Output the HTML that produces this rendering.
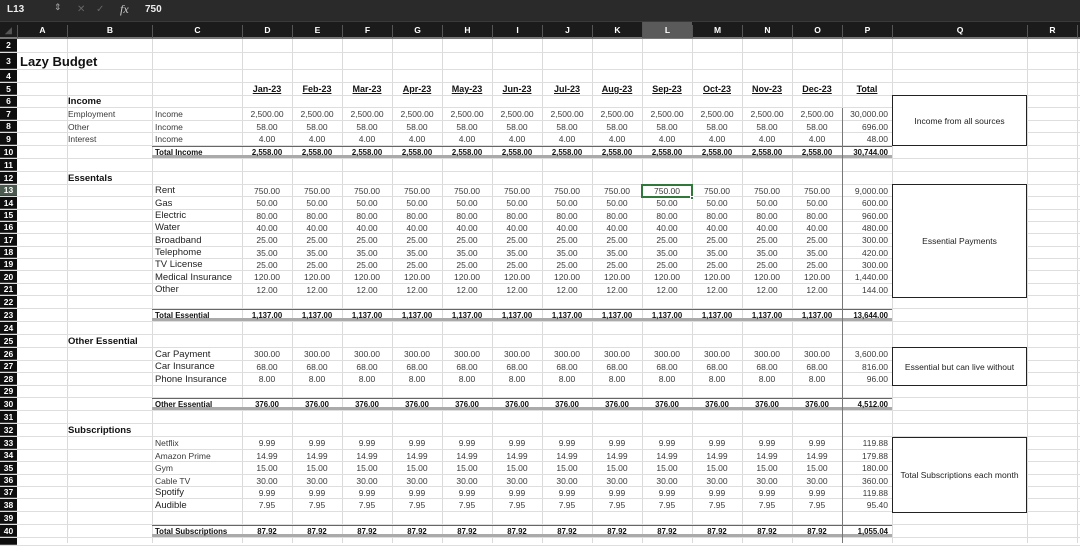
<!DOCTYPE html>
<html><head><meta charset="utf-8"><style>
*{margin:0;padding:0;box-sizing:border-box}
body{width:1080px;height:543px;overflow:hidden;background:#fff;font-family:"Liberation Sans",sans-serif;position:relative;color:#3a3a3a}
#fb{position:absolute;left:0;top:0;width:1080px;height:21px;background:#2a2a2a;color:#eee;font-size:10px}
#fb span{position:absolute;top:4px}
#ch{position:absolute;left:0;top:21px;width:1080px;height:18px;background:#1b1b1b;border-top:1px solid #3a3a3a;border-bottom:2px solid #777}
#ch span{position:absolute;top:3px;color:#fff;font-weight:bold;font-size:8.5px;text-align:center;border-left:1px solid #555;height:13px}
#rh{position:absolute;left:0;top:39px;width:17px;height:504px;background:#0e0e0e}
.v{position:absolute;top:39px;height:504px;width:1px;background:#dadada}
.r{position:absolute;left:0;width:1080px;border-bottom:1px solid #dedede;font-size:8.5px}
.r>s{position:absolute;left:0;top:0;width:17px;height:100%;text-decoration:none;color:#fff;font-weight:bold;font-size:8.5px;text-align:center;display:flex;align-items:center;justify-content:center;background:#0e0e0e;border-bottom:1px solid #444}
.r>.b,.r>.c{position:absolute;top:0;height:100%;display:flex;align-items:center;white-space:nowrap}
.r>.b{left:68px}
.r>.c{left:155px}
.m{position:absolute;left:242px;top:0;height:100%;display:flex;align-items:center}
.m i{font-style:normal;width:50px;text-align:center}
.m b{font-weight:normal;width:50px;text-align:right;padding-right:4px}
.t .m i,.t .m b,.t .c{font-weight:bold;font-size:7.8px;color:#111}
.t .m,.t .c{padding-top:1px}
.t .tb{position:absolute;left:152px;width:740px;top:0;height:100%;border-top:1px solid #666;border-bottom:3px solid #aaa}
.a{font-size:9.5px;color:#222}
.h{font-weight:bold;font-size:9.5px;color:#111}
.box{position:absolute;left:892px;width:135px;border:1px solid #222;display:flex;align-items:center;justify-content:center;font-size:8.5px;color:#222;background:#fff}
</style></head><body>
<div id="fb"><span style="left:7px;font-weight:bold">L13</span><span style="left:54px;color:#aaa;font-size:9px;top:2px">&#x21D5;</span><span style="left:77px;color:#666">&#x2715;</span><span style="left:96px;color:#666">&#x2713;</span><span style="left:120px;font-style:italic;font-family:'Liberation Serif',serif;font-size:12px;top:2px;color:#ccc">fx</span><span style="left:145px;font-weight:bold">750</span></div>
<div id="ch">
<span style="left:0;width:17px;border:none;color:#555">&#x25E2;</span>
<span style="left:17px;width:50px">A</span><span style="left:67px;width:85px">B</span><span style="left:152px;width:90px">C</span>
<span style="left:242px;width:50px">D</span><span style="left:292px;width:50px">E</span><span style="left:342px;width:50px">F</span><span style="left:392px;width:50px">G</span><span style="left:442px;width:50px">H</span><span style="left:492px;width:50px">I</span><span style="left:542px;width:50px">J</span><span style="left:592px;width:50px">K</span><span style="left:642px;width:50px;background:#5a5a5a;top:0;padding-top:3px;height:16px">L</span><span style="left:692px;width:50px">M</span><span style="left:742px;width:50px">N</span><span style="left:792px;width:50px">O</span><span style="left:842px;width:50px">P</span><span style="left:892px;width:135px">Q</span><span style="left:1027px;width:50px">R</span><span style="left:1077px;width:3px"></span>
</div>
<div id="rh"></div>
<div class="v" style="left:67px"></div><div class="v" style="left:152px"></div><div class="v" style="left:242px"></div><div class="v" style="left:292px"></div><div class="v" style="left:342px"></div><div class="v" style="left:392px"></div><div class="v" style="left:442px"></div><div class="v" style="left:492px"></div><div class="v" style="left:542px"></div><div class="v" style="left:592px"></div><div class="v" style="left:642px"></div><div class="v" style="left:692px"></div><div class="v" style="left:742px"></div><div class="v" style="left:792px"></div><div class="v" style="left:842px"></div><div class="v" style="left:892px"></div><div class="v" style="left:1027px"></div><div class="v" style="left:1077px"></div>

<div class="r" style="top:39px;height:14px"><s>2</s></div>
<div class="r" style="top:53px;height:17px"><s>3</s><span class="b" style="left:20px;font-weight:bold;font-size:13px;color:#111">Lazy Budget</span></div>
<div class="r" style="top:70px;height:13px"><s>4</s></div>
<div class="r" style="top:83px;height:13px"><s>5</s><div class="m" style="font-weight:bold;text-decoration:underline;font-size:9px;color:#111"><i>Jan-23</i><i>Feb-23</i><i>Mar-23</i><i>Apr-23</i><i>May-23</i><i>Jun-23</i><i>Jul-23</i><i>Aug-23</i><i>Sep-23</i><i>Oct-23</i><i>Nov-23</i><i>Dec-23</i><i>Total</i></div></div>
<div class="r" style="top:96px;height:12px"><s>6</s><span class="b h">Income</span></div>
<div class="r" style="top:108px;height:13px"><s>7</s><span class="b">Employment</span><span class="c">Income</span><div class="m"><i>2,500.00</i><i>2,500.00</i><i>2,500.00</i><i>2,500.00</i><i>2,500.00</i><i>2,500.00</i><i>2,500.00</i><i>2,500.00</i><i>2,500.00</i><i>2,500.00</i><i>2,500.00</i><i>2,500.00</i><b>30,000.00</b></div></div>
<div class="r" style="top:121px;height:12px"><s>8</s><span class="b">Other</span><span class="c">Income</span><div class="m"><i>58.00</i><i>58.00</i><i>58.00</i><i>58.00</i><i>58.00</i><i>58.00</i><i>58.00</i><i>58.00</i><i>58.00</i><i>58.00</i><i>58.00</i><i>58.00</i><b>696.00</b></div></div>
<div class="r" style="top:133px;height:13px"><s>9</s><span class="b">Interest</span><span class="c">Income</span><div class="m"><i>4.00</i><i>4.00</i><i>4.00</i><i>4.00</i><i>4.00</i><i>4.00</i><i>4.00</i><i>4.00</i><i>4.00</i><i>4.00</i><i>4.00</i><i>4.00</i><b>48.00</b></div></div>
<div class="r t" style="top:146px;height:13px"><s>10</s><div class="tb"></div><span class="c">Total Income</span><div class="m"><i>2,558.00</i><i>2,558.00</i><i>2,558.00</i><i>2,558.00</i><i>2,558.00</i><i>2,558.00</i><i>2,558.00</i><i>2,558.00</i><i>2,558.00</i><i>2,558.00</i><i>2,558.00</i><i>2,558.00</i><b>30,744.00</b></div></div>
<div class="r" style="top:159px;height:13px"><s>11</s></div>
<div class="r" style="top:172px;height:13px"><s>12</s><span class="b h">Essentals</span></div>
<div class="r" style="top:185px;height:12px"><s style="background:#4b5a4e">13</s><span class="c a">Rent</span><div class="m"><i>750.00</i><i>750.00</i><i>750.00</i><i>750.00</i><i>750.00</i><i>750.00</i><i>750.00</i><i>750.00</i><i>750.00</i><i>750.00</i><i>750.00</i><i>750.00</i><b>9,000.00</b></div></div>
<div class="r" style="top:197px;height:13px"><s>14</s><span class="c a">Gas</span><div class="m"><i>50.00</i><i>50.00</i><i>50.00</i><i>50.00</i><i>50.00</i><i>50.00</i><i>50.00</i><i>50.00</i><i>50.00</i><i>50.00</i><i>50.00</i><i>50.00</i><b>600.00</b></div></div>
<div class="r" style="top:210px;height:12px"><s>15</s><span class="c a">Electric</span><div class="m"><i>80.00</i><i>80.00</i><i>80.00</i><i>80.00</i><i>80.00</i><i>80.00</i><i>80.00</i><i>80.00</i><i>80.00</i><i>80.00</i><i>80.00</i><i>80.00</i><b>960.00</b></div></div>
<div class="r" style="top:222px;height:12px"><s>16</s><span class="c a">Water</span><div class="m"><i>40.00</i><i>40.00</i><i>40.00</i><i>40.00</i><i>40.00</i><i>40.00</i><i>40.00</i><i>40.00</i><i>40.00</i><i>40.00</i><i>40.00</i><i>40.00</i><b>480.00</b></div></div>
<div class="r" style="top:234px;height:13px"><s>17</s><span class="c a">Broadband</span><div class="m"><i>25.00</i><i>25.00</i><i>25.00</i><i>25.00</i><i>25.00</i><i>25.00</i><i>25.00</i><i>25.00</i><i>25.00</i><i>25.00</i><i>25.00</i><i>25.00</i><b>300.00</b></div></div>
<div class="r" style="top:247px;height:12px"><s>18</s><span class="c a">Telephome</span><div class="m"><i>35.00</i><i>35.00</i><i>35.00</i><i>35.00</i><i>35.00</i><i>35.00</i><i>35.00</i><i>35.00</i><i>35.00</i><i>35.00</i><i>35.00</i><i>35.00</i><b>420.00</b></div></div>
<div class="r" style="top:259px;height:12px"><s>19</s><span class="c a">TV License</span><div class="m"><i>25.00</i><i>25.00</i><i>25.00</i><i>25.00</i><i>25.00</i><i>25.00</i><i>25.00</i><i>25.00</i><i>25.00</i><i>25.00</i><i>25.00</i><i>25.00</i><b>300.00</b></div></div>
<div class="r" style="top:271px;height:13px"><s>20</s><span class="c a">Medical Insurance</span><div class="m"><i>120.00</i><i>120.00</i><i>120.00</i><i>120.00</i><i>120.00</i><i>120.00</i><i>120.00</i><i>120.00</i><i>120.00</i><i>120.00</i><i>120.00</i><i>120.00</i><b>1,440.00</b></div></div>
<div class="r" style="top:284px;height:12px"><s>21</s><span class="c a">Other</span><div class="m"><i>12.00</i><i>12.00</i><i>12.00</i><i>12.00</i><i>12.00</i><i>12.00</i><i>12.00</i><i>12.00</i><i>12.00</i><i>12.00</i><i>12.00</i><i>12.00</i><b>144.00</b></div></div>
<div class="r" style="top:296px;height:13px"><s>22</s></div>
<div class="r t" style="top:309px;height:13px"><s>23</s><div class="tb"></div><span class="c">Total Essential</span><div class="m"><i>1,137.00</i><i>1,137.00</i><i>1,137.00</i><i>1,137.00</i><i>1,137.00</i><i>1,137.00</i><i>1,137.00</i><i>1,137.00</i><i>1,137.00</i><i>1,137.00</i><i>1,137.00</i><i>1,137.00</i><b>13,644.00</b></div></div>
<div class="r" style="top:322px;height:13px"><s>24</s></div>
<div class="r" style="top:335px;height:13px"><s>25</s><span class="b h">Other Essential</span></div>
<div class="r" style="top:348px;height:13px"><s>26</s><span class="c a">Car Payment</span><div class="m"><i>300.00</i><i>300.00</i><i>300.00</i><i>300.00</i><i>300.00</i><i>300.00</i><i>300.00</i><i>300.00</i><i>300.00</i><i>300.00</i><i>300.00</i><i>300.00</i><b>3,600.00</b></div></div>
<div class="r" style="top:361px;height:12px"><s>27</s><span class="c a">Car Insurance</span><div class="m"><i>68.00</i><i>68.00</i><i>68.00</i><i>68.00</i><i>68.00</i><i>68.00</i><i>68.00</i><i>68.00</i><i>68.00</i><i>68.00</i><i>68.00</i><i>68.00</i><b>816.00</b></div></div>
<div class="r" style="top:373px;height:13px"><s>28</s><span class="c a">Phone Insurance</span><div class="m"><i>8.00</i><i>8.00</i><i>8.00</i><i>8.00</i><i>8.00</i><i>8.00</i><i>8.00</i><i>8.00</i><i>8.00</i><i>8.00</i><i>8.00</i><i>8.00</i><b>96.00</b></div></div>
<div class="r" style="top:386px;height:12px"><s>29</s></div>
<div class="r t" style="top:398px;height:13px"><s>30</s><div class="tb"></div><span class="c">Other Essential</span><div class="m"><i>376.00</i><i>376.00</i><i>376.00</i><i>376.00</i><i>376.00</i><i>376.00</i><i>376.00</i><i>376.00</i><i>376.00</i><i>376.00</i><i>376.00</i><i>376.00</i><b>4,512.00</b></div></div>
<div class="r" style="top:411px;height:13px"><s>31</s></div>
<div class="r" style="top:424px;height:13px"><s>32</s><span class="b h">Subscriptions</span></div>
<div class="r" style="top:437px;height:13px"><s>33</s><span class="c">Netflix</span><div class="m"><i>9.99</i><i>9.99</i><i>9.99</i><i>9.99</i><i>9.99</i><i>9.99</i><i>9.99</i><i>9.99</i><i>9.99</i><i>9.99</i><i>9.99</i><i>9.99</i><b>119.88</b></div></div>
<div class="r" style="top:450px;height:12px"><s>34</s><span class="c">Amazon Prime</span><div class="m"><i>14.99</i><i>14.99</i><i>14.99</i><i>14.99</i><i>14.99</i><i>14.99</i><i>14.99</i><i>14.99</i><i>14.99</i><i>14.99</i><i>14.99</i><i>14.99</i><b>179.88</b></div></div>
<div class="r" style="top:462px;height:13px"><s>35</s><span class="c">Gym</span><div class="m"><i>15.00</i><i>15.00</i><i>15.00</i><i>15.00</i><i>15.00</i><i>15.00</i><i>15.00</i><i>15.00</i><i>15.00</i><i>15.00</i><i>15.00</i><i>15.00</i><b>180.00</b></div></div>
<div class="r" style="top:475px;height:12px"><s>36</s><span class="c">Cable TV</span><div class="m"><i>30.00</i><i>30.00</i><i>30.00</i><i>30.00</i><i>30.00</i><i>30.00</i><i>30.00</i><i>30.00</i><i>30.00</i><i>30.00</i><i>30.00</i><i>30.00</i><b>360.00</b></div></div>
<div class="r" style="top:487px;height:12px"><s>37</s><span class="c a">Spotify</span><div class="m"><i>9.99</i><i>9.99</i><i>9.99</i><i>9.99</i><i>9.99</i><i>9.99</i><i>9.99</i><i>9.99</i><i>9.99</i><i>9.99</i><i>9.99</i><i>9.99</i><b>119.88</b></div></div>
<div class="r" style="top:499px;height:13px"><s>38</s><span class="c a">Audible</span><div class="m"><i>7.95</i><i>7.95</i><i>7.95</i><i>7.95</i><i>7.95</i><i>7.95</i><i>7.95</i><i>7.95</i><i>7.95</i><i>7.95</i><i>7.95</i><i>7.95</i><b>95.40</b></div></div>
<div class="r" style="top:512px;height:13px"><s>39</s></div>
<div class="r t" style="top:525px;height:13px"><s>40</s><div class="tb"></div><span class="c">Total Subscriptions</span><div class="m"><i>87.92</i><i>87.92</i><i>87.92</i><i>87.92</i><i>87.92</i><i>87.92</i><i>87.92</i><i>87.92</i><i>87.92</i><i>87.92</i><i>87.92</i><i>87.92</i><b>1,055.04</b></div></div>
<div class="r" style="top:538px;height:8px"><s></s></div>

<div style="position:absolute;left:842px;top:108px;width:1px;height:435px;background:#777"></div>
<div style="position:absolute;left:641px;top:184px;width:52px;height:14px;border:2px solid #2f7a3a"></div>
<div style="position:absolute;left:690px;top:196px;width:4px;height:4px;background:#2f7a3a;border:1px solid #fff"></div>
<div class="box" style="top:95px;height:51px">Income from all sources</div>
<div class="box" style="top:184px;height:114px">Essential Payments</div>
<div class="box" style="top:347px;height:39px">Essential but can live without</div>
<div class="box" style="top:437px;height:76px">Total Subscriptions each month</div>
</body></html>
